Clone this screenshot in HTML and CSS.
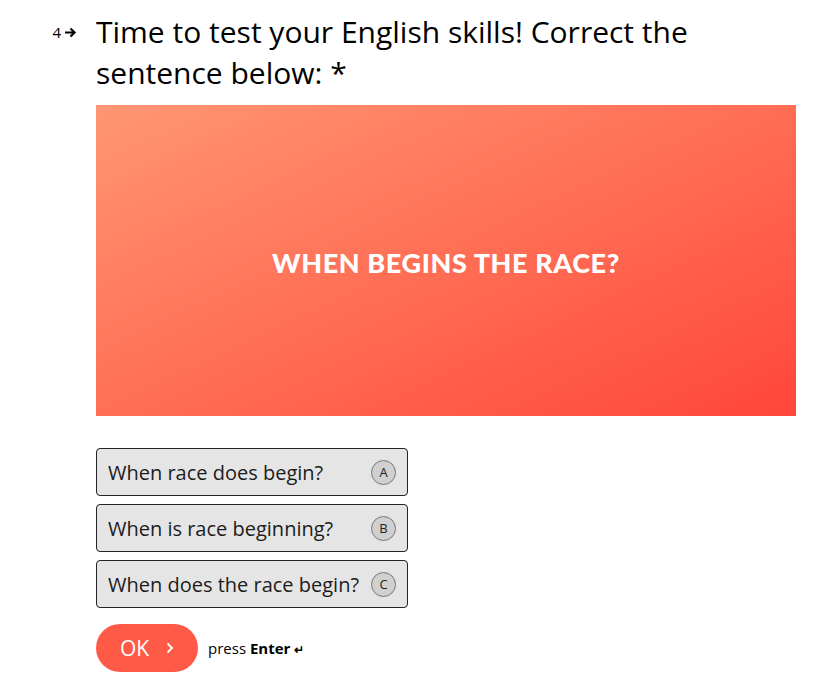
FILE: index.html
```html
<!DOCTYPE html>
<html lang="en">
<head>
  <meta charset="UTF-8" />
  <title>Question 4</title>
  <link rel="stylesheet" href="styles.css">
</head>
<body>
  <div class="question">
    <div class="counter">
      <span class="num">4</span>
      <svg class="arrow" width="13" height="13" viewBox="0 0 13 13"><path d="M1 6.5h9M6.5 2.5l4 4-4 4" fill="none" stroke="#000" stroke-width="2.2"/></svg>
    </div>
    <div class="content">
      <h1>Time to test your English skills! Correct the sentence below: *</h1>
      <div class="picture">
        <span>WHEN BEGINS THE RACE?</span>
      </div>
      <ul class="choices">
        <li class="choice"><span>When race does begin?</span><span class="key">A</span></li>
        <li class="choice"><span>When is race beginning?</span><span class="key">B</span></li>
        <li class="choice"><span>When does the race begin?</span><span class="key">C</span></li>
      </ul>
      <div class="actions">
        <button class="ok">OK <svg width="12" height="14" viewBox="0 0 12 14"><path d="M3.5 2.5 8 7l-4.5 4.5" fill="none" stroke="#fff" stroke-width="1.8"/></svg></button>
        <span class="hint">press <b>Enter</b> <b class="ret">↵</b></span>
      </div>
    </div>
  </div>
</body>
</html>
```

FILE: styles.css
```css
body {
  margin: 0;
  font-family: "Open Sans", sans-serif;
  background: #fff;
  color: #000;
}
.question {
  display: flex;
  padding: 11px 0 0 0;
}
.counter {
  width: 96px;
  display: flex;
  justify-content: flex-end;
  align-items: center;
  gap: 3px;
  height: 41px;
  padding-right: 19px;
  box-sizing: border-box;
  font-size: 15px;
}
.counter .arrow {
  margin-top: 1px;
}
.content {
  width: 700px;
}
h1 {
  margin: 0;
  font-size: 30px;
  line-height: 41px;
  font-weight: 400;
  color: #000;
}
.picture {
  margin-top: 12px;
  height: 311px;
  background: linear-gradient(155deg, #ff9673 0%, #ff7258 45%, #ff463b 100%);
  display: flex;
  align-items: center;
  justify-content: center;
}
.picture span {
  color: #fff;
  font-family: Lato, sans-serif;
  font-weight: 900;
  font-size: 27px;
  letter-spacing: 0.6px;
  margin-top: 3px;
}
.choices {
  list-style: none;
  margin: 32px 0 0 0;
  padding: 0;
  width: 312px;
  display: flex;
  flex-direction: column;
  gap: 8px;
}
.choice {
  height: 48px;
  box-sizing: border-box;
  border: 1px solid #222;
  border-radius: 4px;
  background: #e5e5e5;
  display: flex;
  align-items: center;
  justify-content: space-between;
  padding: 0 11px 0 11px;
  font-size: 20px;
  color: #1c1c1c;
}
.key {
  width: 25px;
  height: 25px;
  box-sizing: border-box;
  border: 1px solid #777;
  border-radius: 50%;
  background: #d0d0d0;
  display: flex;
  align-items: center;
  justify-content: center;
  font-size: 13px;
  color: #222;
}
.actions {
  margin-top: 16px;
  display: flex;
  align-items: center;
  gap: 10px;
}
.ok {
  width: 102px;
  height: 48px;
  border: none;
  border-radius: 24px;
  background: #ff5a48;
  color: #fff;
  font-family: "Open Sans", sans-serif;
  font-size: 21px;
  display: flex;
  align-items: center;
  justify-content: center;
  gap: 15px;
  padding: 0 0 0 2px;
}
.hint {
  font-size: 15px;
  color: #000;
}
.ret {
  font-size: 12px;
}
```
